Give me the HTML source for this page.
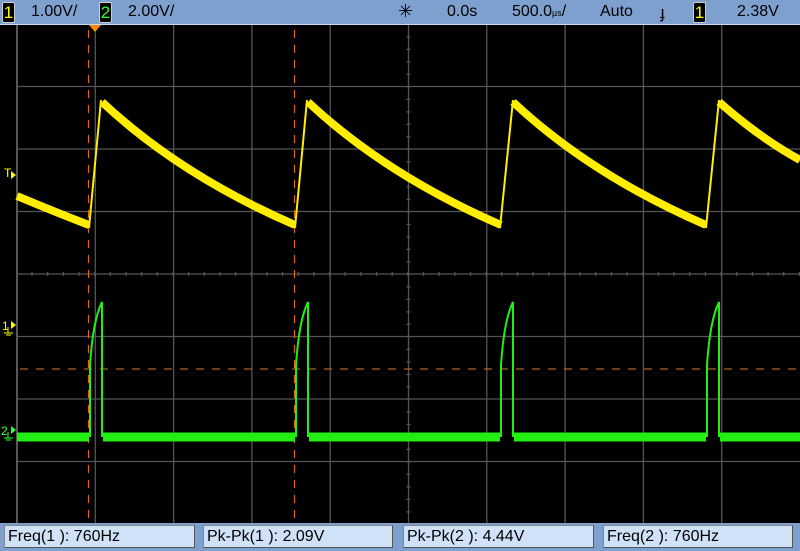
<!DOCTYPE html>
<html><head><meta charset="utf-8"><style>
body{margin:0;width:800px;height:551px;overflow:hidden;background:#000;font-family:"Liberation Sans",sans-serif}
.hdr{position:absolute;left:0;top:0;width:800px;height:25px;background:#7ea0cf;border-bottom:1px solid #c8d8ee;box-sizing:border-box}
.t{position:absolute;top:3px;font-size:16px;color:#000;white-space:nowrap}
.bx{position:absolute;top:2px;width:11px;height:19px;background:#000;border:1px solid #ccc;border-radius:2px;font-size:17px;line-height:19px;text-align:center}
.ftr{position:absolute;left:0;top:523px;width:800px;height:28px;background:#7ea0cf}
.m{position:absolute;top:2px;height:23px;background:#d0e2f7;border:1px solid #888;border-right-color:#555;border-bottom-color:#555;box-sizing:border-box;font-size:16px;line-height:22px;padding-left:3px;color:#000}
</style></head><body>
<div class="hdr">
<div class="bx" style="left:2px;color:#ff0">1</div>
<div class="t" style="left:31px">1.00V/</div>
<div class="bx" style="left:99px;color:#3f3">2</div>
<div class="t" style="left:128px">2.00V/</div>
<div class="t" style="left:398px;font-size:18px;top:1px">✳</div>
<div class="t" style="left:447px">0.0s</div>
<div class="t" style="left:512px">500.0<span style="font-size:9px">µs</span>/</div>
<div class="t" style="left:600px">Auto</div>
<div class="t" style="left:660px;font-size:17px">ɟ</div>
<div class="bx" style="left:693px;color:#ff0">1</div>
<div class="t" style="left:737px">2.38V</div>
</div>
<svg style="position:absolute;left:0;top:25px" width="800" height="498" viewBox="0 25 800 498">
<g stroke="#555" stroke-width="1.3">
<line x1="17" y1="25" x2="17" y2="523" stroke="#888"/>
<line x1="95.3" y1="25" x2="95.3" y2="523"/><line x1="173.6" y1="25" x2="173.6" y2="523"/><line x1="251.9" y1="25" x2="251.9" y2="523"/><line x1="330.2" y1="25" x2="330.2" y2="523"/><line x1="408.5" y1="25" x2="408.5" y2="523"/><line x1="486.8" y1="25" x2="486.8" y2="523"/><line x1="565.1" y1="25" x2="565.1" y2="523"/><line x1="643.4" y1="25" x2="643.4" y2="523"/><line x1="721.7" y1="25" x2="721.7" y2="523"/>
<line x1="17" y1="86.5" x2="800" y2="86.5"/><line x1="17" y1="149" x2="800" y2="149"/><line x1="17" y1="211.5" x2="800" y2="211.5"/><line x1="17" y1="274" x2="800" y2="274"/><line x1="17" y1="336.5" x2="800" y2="336.5"/><line x1="17" y1="399" x2="800" y2="399"/><line x1="17" y1="461.5" x2="800" y2="461.5"/>
</g>
<line x1="17" y1="274" x2="800" y2="274" stroke="#555" stroke-width="4" stroke-dasharray="1.3,14.36" stroke-dashoffset="-14.36"/>
<line x1="408.5" y1="25" x2="408.5" y2="523" stroke="#555" stroke-width="4" stroke-dasharray="1.3,11.2" stroke-dashoffset="-11.2"/>
<line x1="20" y1="369" x2="800" y2="369" stroke="#d07a20" stroke-width="1" stroke-dasharray="8,8"/>
<line x1="88.5" y1="30" x2="88.5" y2="523" stroke="#e06a10" stroke-width="1.2" stroke-dasharray="8,7"/>
<line x1="294.5" y1="30" x2="294.5" y2="523" stroke="#e06a10" stroke-width="1.2" stroke-dasharray="8,7"/>
<polygon points="89,25 101,25 95,32" fill="#ff8a00"/>
<g fill="none" stroke="#ffee00" stroke-linejoin="miter">
<path d="M17 196 Q55 212 89 225" stroke-width="8"/>
<path d="M102 102 Q180 175 295 225" stroke-width="8"/>
<path d="M308 102 Q386 175 501 225" stroke-width="8"/>
<path d="M513 102 Q591 175 706 225" stroke-width="8"/>
<path d="M719 102 Q760 138 800 160" stroke-width="8"/>
<path d="M89 228 L101 100 M295 228 L307 100 M500 228 L513 100 M706 228 L719 100" stroke-width="2"/>
</g>
<g fill="none" stroke="#22ee11">
<path d="M17 437 H89 M103 437 H295 M309 437 H500 M514 437 H706 M720 437 H800" stroke-width="9"/>
<path d="M90 437 V365 Q93 320 102 302 V437 M296 437 V365 Q299 320 308 302 V437 M501 437 V365 Q504 320 513 302 V437 M707 437 V365 Q710 320 719 302 V437" stroke-width="2"/>
</g>
<text x="4" y="177" fill="#ff0" font-size="12" font-family="Liberation Sans">T</text>
<polygon points="11,171 16,175 11,179" fill="#ff0"/>
<text x="2" y="330" fill="#ff0" font-size="12" font-family="Liberation Sans">1</text>
<polygon points="11,321 16,325 11,329" fill="#ff0"/>
<path d="M8 327 V333 M4 333 H13 M6 335 H11" stroke="#ff0" fill="none"/>
<text x="1" y="435" fill="#3f3" font-size="12" font-family="Liberation Sans">2</text>
<polygon points="11,426 16,430 11,434" fill="#3f3"/>
<path d="M8 432 V438 M4 438 H13 M6 440 H11" stroke="#3f3" fill="none"/>
</svg>
<div class="ftr">
<div class="m" style="left:4px;width:191px">Freq(1 ): 760Hz</div>
<div class="m" style="left:203px;width:190px">Pk-Pk(1 ): 2.09V</div>
<div class="m" style="left:403px;width:191px">Pk-Pk(2 ): 4.44V</div>
<div class="m" style="left:603px;width:190px">Freq(2 ): 760Hz</div>
</div>
</body></html>
